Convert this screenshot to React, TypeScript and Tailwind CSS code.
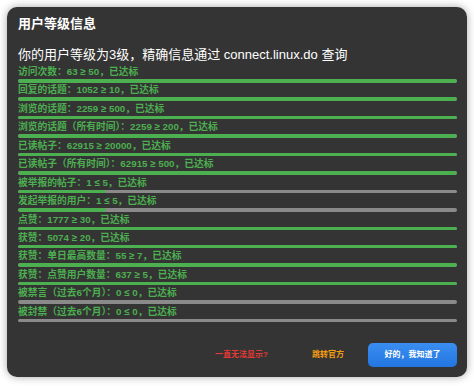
import React from 'react';

interface LevelRow {
  label: string;
  percent: number;
}

const rows: LevelRow[] = [
  { label: '访问次数：63 ≥ 50，已达标', percent: 100 },
  { label: '回复的话题：1052 ≥ 10，已达标', percent: 100 },
  { label: '浏览的话题：2259 ≥ 500，已达标', percent: 100 },
  { label: '浏览的话题（所有时间）：2259 ≥ 200，已达标', percent: 100 },
  { label: '已读帖子：62915 ≥ 20000，已达标', percent: 100 },
  { label: '已读帖子（所有时间）：62915 ≥ 500，已达标', percent: 100 },
  { label: '被举报的帖子：1 ≤ 5，已达标', percent: 20 },
  { label: '发起举报的用户：1 ≤ 5，已达标', percent: 20 },
  { label: '点赞：1777 ≥ 30，已达标', percent: 100 },
  { label: '获赞：5074 ≥ 20，已达标', percent: 100 },
  { label: '获赞：单日最高数量：55 ≥ 7，已达标', percent: 100 },
  { label: '获赞：点赞用户数量：637 ≥ 5，已达标', percent: 100 },
  { label: '被禁言（过去6个月）：0 ≤ 0，已达标', percent: 0 },
  { label: '被封禁（过去6个月）：0 ≤ 0，已达标', percent: 0 },
];

const font = { fontFamily: '"Liberation Sans", "Noto Sans CJK SC", sans-serif' };

const App: React.FC = () => {
  return (
    <div className="w-[474px] h-[386px] bg-white p-[7px]" style={font}>
      <div className="w-[460px] rounded-[10px] bg-[#343434] pt-[9px] pb-[10px] pl-[11px] pr-[10px] shadow-[0_0_8px_rgba(0,0,0,0.35)]">
        <div className="text-[13px] leading-[16px] font-bold text-white">用户等级信息</div>
        <div className="mt-[14px] text-[13px] leading-[18px] text-white">
          你的用户等级为3级，精确信息通过 connect.linux.do 查询
        </div>
        <div className="mt-[1px]">
          {rows.map((row) => (
            <div key={row.label} className="h-[18.45px]">
              <div className="text-[9.75px] leading-[13px] font-bold text-[#4caf50] whitespace-nowrap">
                {row.label}
              </div>
              <div className="mt-[1px] h-[3.5px] w-full rounded-full bg-[#8a8a8a] overflow-hidden">
                <div className="h-full rounded-full bg-[#4caf50]" style={{ width: `${row.percent}%` }} />
              </div>
            </div>
          ))}
        </div>
        <div className="mt-[20px] flex items-center justify-end">
          <span className="mr-[44px] text-[8px] leading-[10px] font-bold text-[#e53935]">一直无法显示?</span>
          <span className="mr-[24px] text-[8px] leading-[10px] font-bold text-[#f39c12]">跳转官方</span>
          <button className="w-[89px] h-[24px] rounded-[5px] bg-gradient-to-b from-[#3a8df0] to-[#2276e0] text-[8px] font-bold text-white">
            好的，我知道了
          </button>
        </div>
      </div>
    </div>
  );
};

export default App;
